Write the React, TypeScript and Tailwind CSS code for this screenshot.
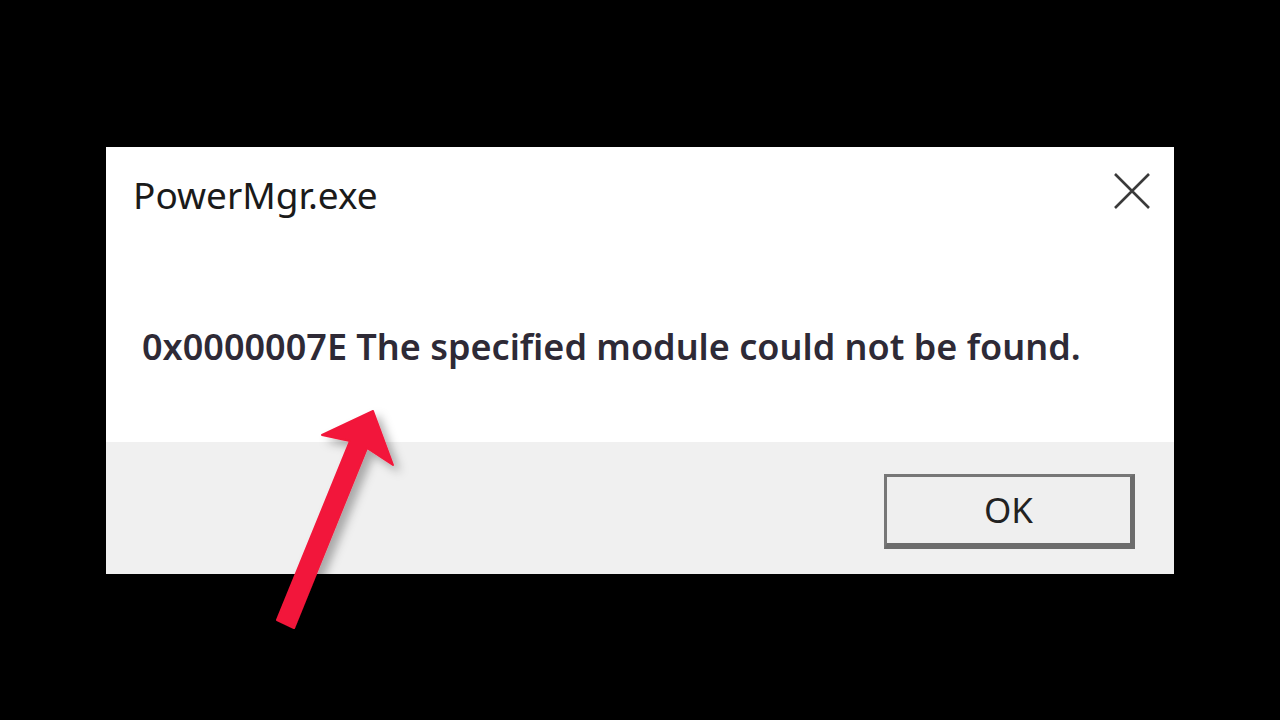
export default function App() {
  return (
    <div className="relative h-[720px] w-[1280px] overflow-hidden bg-black pl-[106px] pt-[147px]">
      {/* dialog */}
      <div className="flex h-[427px] w-[1068px] flex-col bg-white font-['Noto_Sans',sans-serif]">
        <div className="flex h-[295px] flex-col bg-white">
          <div className="flex items-start justify-between pl-[27px] pr-[22px] pt-[24px]">
            <p className="text-[37px] leading-[48px] text-[#1a1a1a]">PowerMgr.exe</p>
            <svg width="40" height="40" viewBox="0 0 40 40" className="mt-[0px]">
              <path d="M3 3 L37 37 M37 3 L3 37" stroke="#3a3a3a" strokeWidth="2.6" />
            </svg>
          </div>
          <p className="mt-[104px] pl-[36px] text-[36px] font-semibold leading-[48px] text-[#2e2a36]">
            0x0000007E The specified module could not be found.
          </p>
        </div>
        <div className="flex flex-1 items-start justify-end bg-[#f0f0f0] pr-[39px] pt-[32px]">
          <button className="flex h-[75px] w-[251px] items-center justify-center border-[3px] border-[#777777] border-b-[6px] border-r-[5px] border-b-[#6c6c6c] border-r-[#6c6c6c] bg-[#efefef] text-[35px] text-[#222]">
            OK
          </button>
        </div>
      </div>
      {/* red arrow overlay */}
      <svg className="absolute left-0 top-0" width="1280" height="720" viewBox="0 0 1280 720">
        <defs>
          <filter id="sh" x="-50%" y="-50%" width="200%" height="200%">
            <feDropShadow dx="6" dy="6" stdDeviation="5" floodColor="#000" floodOpacity="0.3" />
          </filter>
        </defs>
        <polygon
          points="373,411 393,465 367,448 294,628 277,620 350,441 322,435"
          fill="#f2163a"
          stroke="#f2163a"
          strokeWidth="2"
          strokeLinejoin="round"
          filter="url(#sh)"
        />
      </svg>
    </div>
  );
}
